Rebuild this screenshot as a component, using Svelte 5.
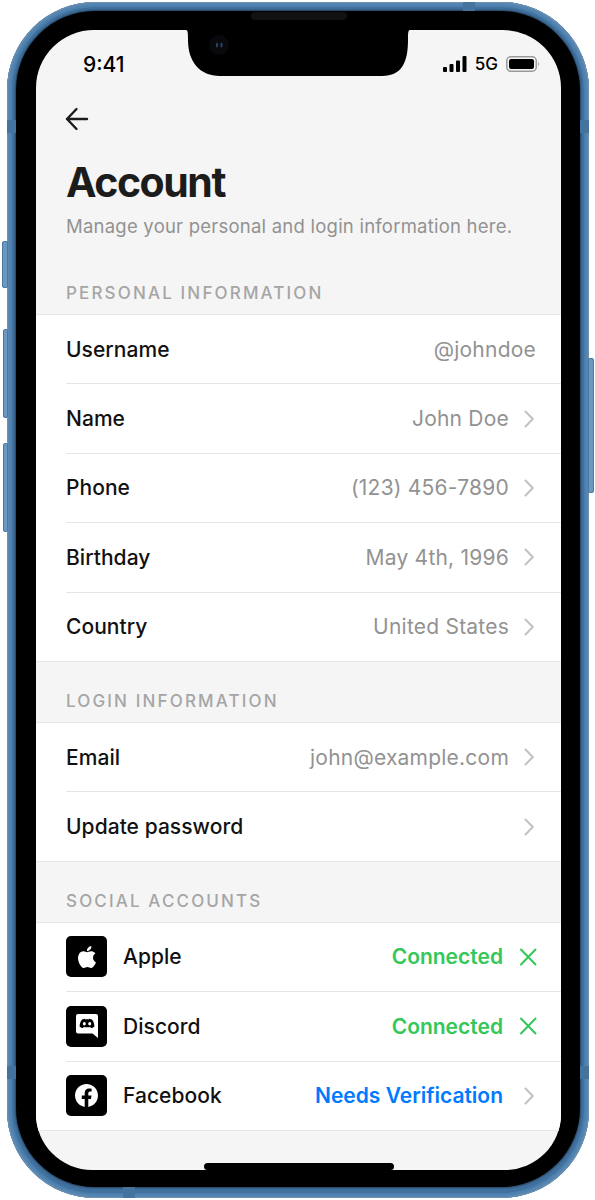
<script>
const personal = [
  { label: 'Username', value: '@johndoe', chevron: false },
  { label: 'Name', value: 'John Doe', chevron: true },
  { label: 'Phone', value: '(123) 456-7890', chevron: true },
  { label: 'Birthday', value: 'May 4th, 1996', chevron: true },
  { label: 'Country', value: 'United States', chevron: true }
]

const login = [
  { label: 'Email', value: 'john@example.com', chevron: true },
  { label: 'Update password', value: '', chevron: true }
]

const social = [
  { label: 'Apple', icon: 'apple', status: 'Connected', kind: 'ok' },
  { label: 'Discord', icon: 'discord', status: 'Connected', kind: 'ok' },
  { label: 'Facebook', icon: 'facebook', status: 'Needs Verification', kind: 'warn' }
]
</script>

{#snippet chevron()}
  <svg class="chev" width="12" height="18" viewBox="0 0 12 18" fill="none" stroke="#c2c2c2" stroke-width="2" stroke-linecap="round" stroke-linejoin="round">
    <path d="M1.5 1.5 L8.8 9 L1.5 16.5" />
  </svg>
{/snippet}

{#snippet row(item)}
  <li class="row">
    <span class="label">{item.label}</span>
    <span class="value">{item.value}</span>
    {#if item.chevron}
      {@render chevron()}
    {/if}
  </li>
{/snippet}

<div class="phone">
  <span class="btn silent"></span>
  <span class="btn vol-up"></span>
  <span class="btn vol-down"></span>
  <span class="btn power"></span>

  <span class="band band-tl"></span>
  <span class="band band-tr"></span>
  <span class="band band-bl"></span>
  <span class="band band-br"></span>
  <span class="band band-top"></span>
  <span class="band band-bottom"></span>

  <div class="bezel">
    <div class="screen">
      <svg class="notch" width="224" height="48" viewBox="0 0 224 48">
        <path d="M0 0 C2 0 2 4 2 10 C2 32 14 46 34 46 L196 46 C216 46 222 32 222 10 C222 4 222 0 224 0 Z" fill="#000" />
        <circle cx="33" cy="15" r="10" fill="#08090c" />
        <ellipse cx="31" cy="15" rx="1.2" ry="2.6" fill="#27415e" />
        <ellipse cx="35.5" cy="15" rx="1.2" ry="2.6" fill="#27415e" />
      </svg>

      <div class="status">
        <span class="time">9:41</span>
        <span class="status-right">
          <svg width="24" height="16" viewBox="0 0 24 16" fill="#000">
            <rect x="0" y="11" width="4" height="5" rx="1" />
            <rect x="6.5" y="8" width="4" height="8" rx="1" />
            <rect x="13" y="4.5" width="4" height="11.5" rx="1" />
            <rect x="19.5" y="0" width="4" height="16" rx="1" />
          </svg>
          <span class="net">5G</span>
          <svg width="34" height="16" viewBox="0 0 34 16">
            <rect x="0.75" y="0.75" width="29.5" height="14.5" rx="4" fill="none" stroke="#9a9a9a" stroke-width="1.5" />
            <rect x="3" y="3" width="25" height="10" rx="2.2" fill="#000" />
            <path d="M32 6 C33.2 6.4 33.2 9.6 32 10 Z" fill="#9a9a9a" />
          </svg>
        </span>
      </div>

      <div class="back">
        <svg width="24" height="24" viewBox="0 0 24 24" fill="none" stroke="#1c1c1c" stroke-width="2.4" stroke-linecap="round" stroke-linejoin="round">
          <path d="M22 12 H2 M11.5 2 L2 12 L11.5 22" />
        </svg>
      </div>

      <h1>Account</h1>
      <p class="sub">Manage your personal and login information here.</p>

      <h2>Personal information</h2>
      <ul>
        {#each personal as item}
          {@render row(item)}
        {/each}
      </ul>

      <h2>Login information</h2>
      <ul>
        {#each login as item}
          {@render row(item)}
        {/each}
      </ul>

      <h2>Social accounts</h2>
      <ul>
        {#each social as item}
          <li class="row">
            <span class="logo">
              {#if item.icon === 'apple'}
                <svg width="22" height="22" viewBox="0 0 24 24" fill="#fff">
                  <path d="M12.152 6.896c-.948 0-2.415-1.078-3.96-1.04-2.04.027-3.91 1.183-4.961 3.014-2.117 3.675-.546 9.103 1.519 12.09 1.013 1.454 2.208 3.09 3.792 3.039 1.52-.065 2.09-.987 3.935-.987 1.831 0 2.35.987 3.96.948 1.637-.026 2.676-1.48 3.676-2.948 1.156-1.688 1.636-3.325 1.662-3.415-.039-.013-3.182-1.221-3.22-4.857-.026-3.04 2.48-4.494 2.597-4.559-1.429-2.09-3.623-2.324-4.39-2.376-2-.156-3.675 1.09-4.61 1.09zM15.53 3.83c.843-1.012 1.4-2.427 1.245-3.83-1.207.052-2.662.805-3.532 1.818-.78.896-1.454 2.338-1.273 3.714 1.338.104 2.715-.688 3.559-1.701" />
                </svg>
              {:else if item.icon === 'discord'}
                <svg width="22" height="24" viewBox="0 0 22 24">
                  <path d="M2 0 H20 A2 2 0 0 1 22 2 V24 L16.5 19.5 H2 A2 2 0 0 1 0 17.5 V2 A2 2 0 0 1 2 0 Z" fill="#fff" />
                  <path d="M6 5.5 C7.5 4.9 8.5 4.7 9 4.7 L9.4 5.4 C10.4 5.3 11.6 5.3 12.6 5.4 L13 4.7 C13.5 4.7 14.5 4.9 16 5.5 C17.8 8 18.5 10.5 18.3 12.8 C17 13.7 16 14 15 14.1 L14.3 13 C12.5 13.4 9.5 13.4 7.7 13 L7 14.1 C6 14 5 13.7 3.7 12.8 C3.5 10.5 4.2 8 6 5.5 Z" fill="#000" />
                  <ellipse cx="8.3" cy="9.8" rx="1.5" ry="1.7" fill="#fff" />
                  <ellipse cx="13.7" cy="9.8" rx="1.5" ry="1.7" fill="#fff" />
                </svg>
              {:else}
                <svg width="23" height="23" viewBox="0 0 24 24" fill="#fff">
                  <path d="M24 12.073c0-6.627-5.373-12-12-12s-12 5.373-12 12c0 5.99 4.388 10.954 10.125 11.854v-8.385H7.078v-3.47h3.047V9.43c0-3.007 1.792-4.669 4.533-4.669 1.312 0 2.686.235 2.686.235v2.953H15.83c-1.491 0-1.956.925-1.956 1.874v2.25h3.328l-.532 3.47h-2.796v8.385C19.612 23.027 24 18.062 24 12.073z" />
                </svg>
              {/if}
            </span>
            <span class="label">{item.label}</span>
            <span class="status-text {item.kind}">{item.status}</span>
            {#if item.kind === 'ok'}
              <svg class="close" width="18" height="18" viewBox="0 0 18 18" fill="none" stroke="#34c759" stroke-width="2" stroke-linecap="round">
                <path d="M2 1.5 L16.5 16.5 M16.5 1.5 L2 16.5" />
              </svg>
            {:else}
              {@render chevron()}
            {/if}
          </li>
        {/each}
      </ul>

      <span class="home"></span>
    </div>
  </div>

  <span class="speaker"></span>
</div>

<style>
:global(body) {
  margin: 0;
  background: #fff;
}

.phone {
  position: relative;
  box-sizing: border-box;
  width: 582px;
  height: 1196px;
  margin: 2px 0 0 7px;
  padding: 9px 9px 11px 9px;
  border-radius: 88px;
  background: #41719e;
  box-shadow:
    inset 0 0 1px 1px #7391ad,
    inset 0 0 2px 3px #5687b3,
    inset 0 0 1px 5px #4d80ae;
}

.btn {
  position: absolute;
  background: #6a98c0;
  border: 1px solid #4a789f;
  box-sizing: border-box;
  border-radius: 2px;
}

.silent { left: -5px; top: 239px; width: 6px; height: 47px; }
.vol-up { left: -4px; top: 327px; width: 5px; height: 89px; }
.vol-down { left: -4px; top: 441px; width: 5px; height: 89px; }
.power { right: -5px; top: 356px; width: 6px; height: 135px; }

.band {
  position: absolute;
  background: #44739d;
}

.band-tl { left: 0; top: 118px; width: 9px; height: 13px; }
.band-tr { right: 0; top: 118px; width: 9px; height: 13px; }
.band-bl { left: 0; top: 1064px; width: 9px; height: 13px; }
.band-br { right: 0; top: 1064px; width: 9px; height: 13px; }
.band-top { left: 456px; top: 0; width: 12px; height: 9px; }
.band-bottom { left: 116px; bottom: 0; width: 12px; height: 11px; }

.bezel {
  box-sizing: border-box;
  height: 100%;
  padding: 19px 19px 17px 20px;
  border-radius: 79px;
  background: #000;
  box-shadow: 0 0 2px 1px #24415e;
}

.speaker {
  position: absolute;
  left: 244px;
  top: 10px;
  width: 96px;
  height: 8px;
  border-radius: 4px;
  background: #111;
}

.screen {
  position: relative;
  height: 1140px;
  overflow: hidden;
  border-radius: 58px 58px 56px 56px;
  background: #f5f5f5;
  font-family: Inter, "Liberation Sans", sans-serif;
}

.notch {
  position: absolute;
  left: 150px;
  top: 0;
}

.status {
  display: flex;
  align-items: center;
  justify-content: space-between;
  height: 68px;
  padding: 0 21px 0 47px;
}

.time {
  font-size: 21px;
  font-weight: 500;
  color: #000;
}

.status-right {
  display: flex;
  align-items: center;
  gap: 8px;
}

.net {
  font-size: 17px;
  font-weight: 500;
  color: #000;
}

.back {
  display: flex;
  align-items: center;
  height: 42px;
  padding-left: 29px;
}

h1 {
  margin: 17px 0 0;
  padding-left: 30px;
  font-size: 41px;
  line-height: 50px;
  font-weight: 700;
  letter-spacing: -1.45px;
  color: #1c1c1c;
}

.sub {
  margin: 7px 0 16px;
  padding-left: 30px;
  font-size: 18.5px;
  line-height: 24px;
  letter-spacing: 0.23px;
  color: #929292;
}

h2 {
  box-sizing: border-box;
  height: 60px;
  margin: 0;
  padding: 27px 0 0 30px;
  font-size: 17px;
  line-height: 24px;
  font-weight: 500;
  letter-spacing: 2.15px;
  text-transform: uppercase;
  color: #a5a5a5;
}

ul {
  margin: 0;
  padding: 0 0 0 30px;
  list-style: none;
  background: #fff;
  border-top: 1px solid #e6e6e6;
  border-bottom: 1px solid #e6e6e6;
}

.row {
  box-sizing: border-box;
  display: flex;
  align-items: center;
  height: 69.4px;
  padding-right: 25px;
  border-bottom: 1px solid #e6e6e6;
}

.row:last-child {
  border-bottom: none;
  height: 68.4px;
}

.label {
  margin-right: auto;
  font-size: 21px;
  font-weight: 500;
  letter-spacing: 0.05px;
  color: #111;
}

.value {
  font-size: 21px;
  letter-spacing: 0.22px;
  color: #929292;
}

.chev {
  margin-left: 15px;
}

.close {
  margin: 0 -1px 0 10px;
}

.logo {
  display: flex;
  align-items: center;
  justify-content: center;
  width: 41px;
  height: 41px;
  margin-right: 16px;
  border-radius: 5px;
  background: #000;
}

.status-text {
  margin-right: 6px;
  font-size: 21px;
  font-weight: 600;
}

.ok { color: #34c759; }
.warn { color: #007aff; }

.home {
  position: absolute;
  left: 168px;
  bottom: 0;
  width: 190px;
  height: 7px;
  border-radius: 4px;
  background: #000;
}
</style>
